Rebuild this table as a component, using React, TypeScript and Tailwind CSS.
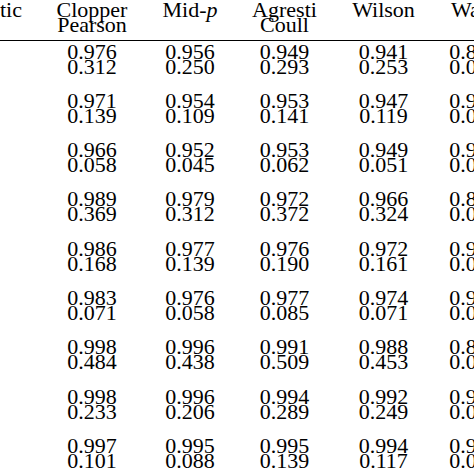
const rows: [string, string][][] = [
  [["0.976", "0.312"], ["0.956", "0.250"], ["0.949", "0.293"], ["0.941", "0.253"], ["0.869", "0.028"]],
  [["0.971", "0.139"], ["0.954", "0.109"], ["0.953", "0.141"], ["0.947", "0.119"], ["0.921", "0.012"]],
  [["0.966", "0.058"], ["0.952", "0.045"], ["0.953", "0.062"], ["0.949", "0.051"], ["0.937", "0.005"]],
  [["0.989", "0.369"], ["0.979", "0.312"], ["0.972", "0.372"], ["0.966", "0.324"], ["0.879", "0.041"]],
  [["0.986", "0.168"], ["0.977", "0.139"], ["0.976", "0.190"], ["0.972", "0.161"], ["0.925", "0.016"]],
  [["0.983", "0.071"], ["0.976", "0.058"], ["0.977", "0.085"], ["0.974", "0.071"], ["0.941", "0.006"]],
  [["0.998", "0.484"], ["0.996", "0.438"], ["0.991", "0.509"], ["0.988", "0.453"], ["0.886", "0.054"]],
  [["0.998", "0.233"], ["0.996", "0.206"], ["0.994", "0.289"], ["0.992", "0.249"], ["0.932", "0.021"]],
  [["0.997", "0.101"], ["0.995", "0.088"], ["0.995", "0.139"], ["0.994", "0.117"], ["0.948", "0.008"]],
];

const cols = "grid grid-cols-[38px_108px_88px_101px_97px_84px]";

export default function App() {
  return (
    <div className="w-[474px] h-[474px] overflow-hidden bg-white text-black font-['Liberation_Serif',serif] text-[22px] leading-[15px]">
      <div className="w-[516px]">
        {/* Header */}
        <div className={`${cols} pt-[2px] pb-[8px] border-b border-black`}>
          <div className="flex justify-end pr-[16px] whitespace-nowrap">Statistic</div>
          <div className="flex flex-col items-center">
            <span>Clopper</span>
            <span>Pearson</span>
          </div>
          <div className="flex flex-col items-center">
            <span>
              Mid-<i>p</i>
            </span>
          </div>
          <div className="flex flex-col items-center">
            <span>Agresti</span>
            <span>Coull</span>
          </div>
          <div className="flex flex-col items-center">
            <span>Wilson</span>
          </div>
          <div className="flex flex-col items-center">
            <span>Wald</span>
          </div>
        </div>

        {/* Rows */}
        <div className="flex flex-col gap-[19.3px] pt-[2.5px]">
          {rows.map((row, i) => (
            <div key={i} className={cols}>
              <div />
              {row.map(([hi, lo], j) => (
                <div key={j} className="flex flex-col items-center">
                  <span>{hi}</span>
                  <span>{lo}</span>
                </div>
              ))}
            </div>
          ))}
        </div>
      </div>
    </div>
  );
}
